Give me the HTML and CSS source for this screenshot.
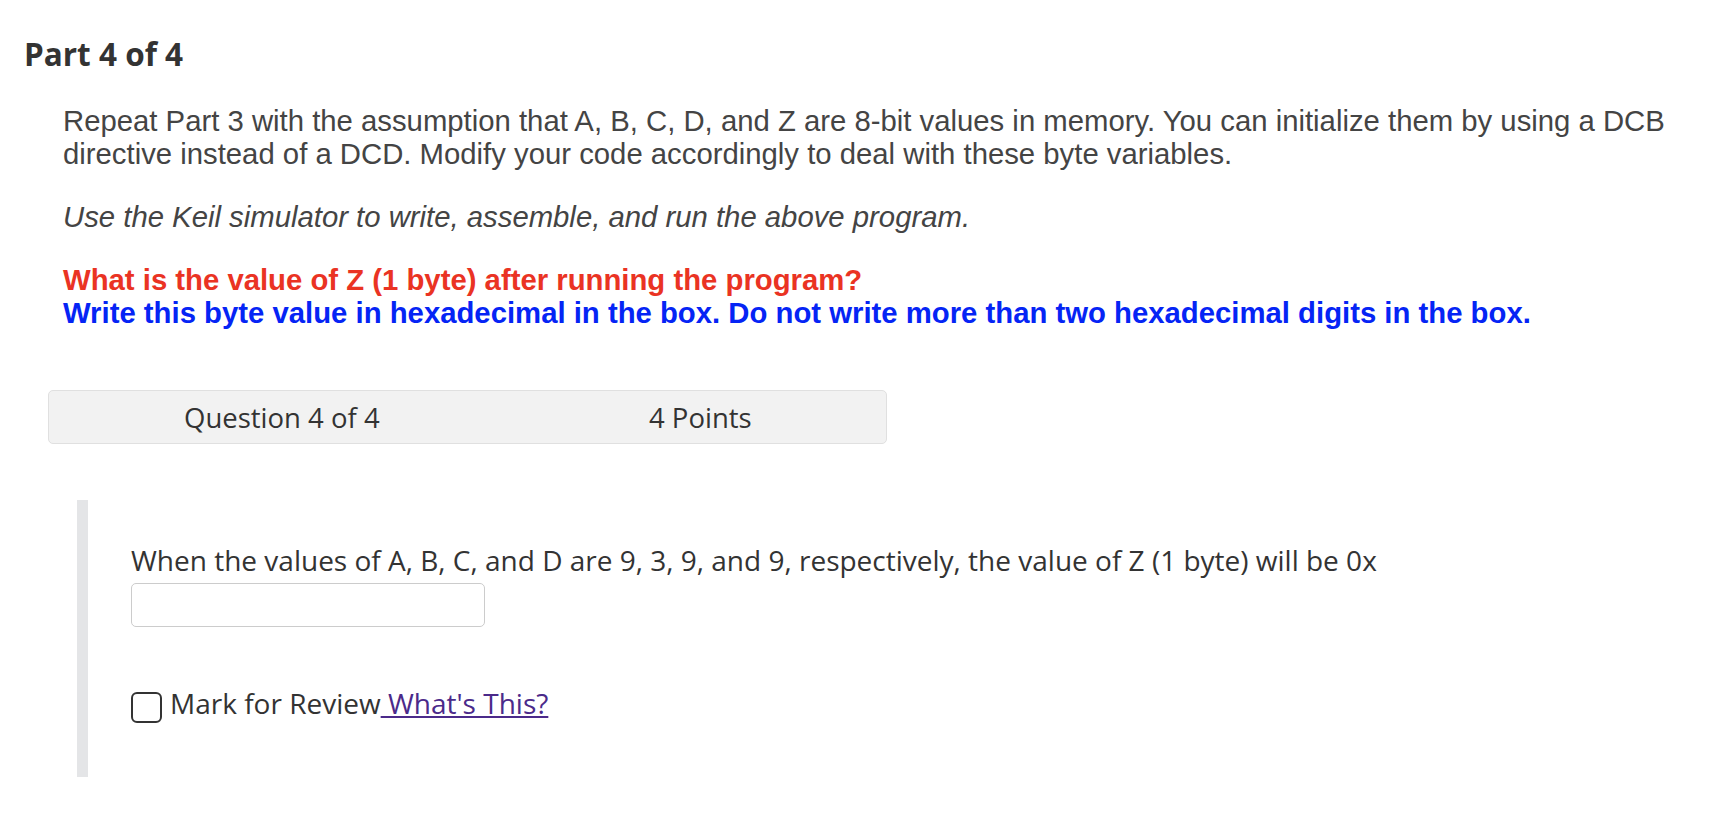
FILE: index.html
```html
<!DOCTYPE html>
<html lang="en">
<head>
<meta charset="utf-8">
<title>Part 4 of 4</title>
<link rel="stylesheet" href="styles.css">
</head>
<body>
<main class="page">
  <h2 class="part-title">Part 4 of 4</h2>
  <section class="prompt">
    <p class="prompt-text">Repeat Part 3 with the assumption that A, B, C, D, and Z are 8-bit values in memory. You can initialize them by using a DCB directive instead of a DCD. Modify your code accordingly to deal with these byte variables.</p>
    <p class="prompt-text prompt-italic">Use the Keil simulator to write, assemble, and run the above program.</p>
    <p class="prompt-ask"><span class="ask-red">What is the value of Z (1 byte) after running the program?</span><br><span class="ask-blue">Write this byte value in hexadecimal in the box. Do not write more than two hexadecimal digits in the box.</span></p>
  </section>
  <div class="q-header">
    <div class="q-cell q-num">Question 4 of 4</div>
    <div class="q-cell q-points">4 Points</div>
  </div>
  <section class="q-body">
    <div class="q-text">When the values of A, B, C, and D are 9, 3, 9, and 9, respectively, the value of Z (1 byte) will be 0x</div>
    <input class="q-input" type="text" aria-label="answer">
    <div class="review-row">
      <span class="checkbox"></span>
      <span class="review-label">Mark for Review<a class="whats-this" href="#"> What's This?</a></span>
    </div>
  </section>
</main>
</body>
</html>
```

FILE: styles.css
```css
html, body {
  margin: 0;
  padding: 0;
  background: #ffffff;
}

.page {
  padding: 34px 20px 0 24px;
  font-family: "Open Sans", "DejaVu Sans", sans-serif;
  color: #333333;
}

.part-title {
  margin: 0;
  font-size: 31.5px;
  line-height: 40px;
  font-weight: 700;
  color: #333333;
}

.prompt {
  padding-left: 39px;
  padding-top: 30px;
  font-family: "Liberation Sans", Arial, sans-serif;
}

.prompt-text {
  margin: 0 0 30px 0;
  font-size: 29.3px;
  line-height: 33px;
  color: #444444;
}

.prompt-italic {
  font-style: italic;
}

.prompt-ask {
  margin: 0;
  font-size: 29.3px;
  line-height: 33px;
  font-weight: 700;
}

.ask-red {
  color: #ea3323;
}

.ask-blue {
  color: #0524f5;
}

.q-header {
  margin-top: 61px;
  margin-left: 24px;
  width: 837px;
  height: 52px;
  box-sizing: content-box;
  background: #f2f2f2;
  border: 1.5px solid #e0e0e0;
  border-radius: 5px;
  display: flex;
  align-items: center;
  font-size: 27.5px;
  color: #333333;
}

.q-num {
  padding-left: 135px;
  width: 465px;
}

.q-body {
  margin-top: 56px;
  margin-left: 53px;
  border-left: 11px solid #e4e5e7;
  padding: 42px 0 54px 43px;
}

.q-text {
  font-size: 28px;
  line-height: 36px;
  color: #333333;
}

.q-input {
  display: block;
  margin: 5px 0 0 0;
  width: 354px;
  height: 44px;
  box-sizing: border-box;
  border: 1.5px solid #cccccc;
  border-radius: 5px;
  background: #ffffff;
  padding: 0 8px;
}

.review-row {
  margin-top: 58px;
  display: flex;
  align-items: flex-start;
  gap: 8px;
}

.checkbox {
  margin-top: 7px;
  width: 31px;
  height: 31px;
  box-sizing: border-box;
  border: 2px solid #333333;
  border-radius: 6px;
  flex: none;
}

.review-label {
  font-size: 28px;
  line-height: 36px;
  color: #333333;
}

.whats-this {
  color: #4b2a8a;
  text-decoration: underline;
}
```
